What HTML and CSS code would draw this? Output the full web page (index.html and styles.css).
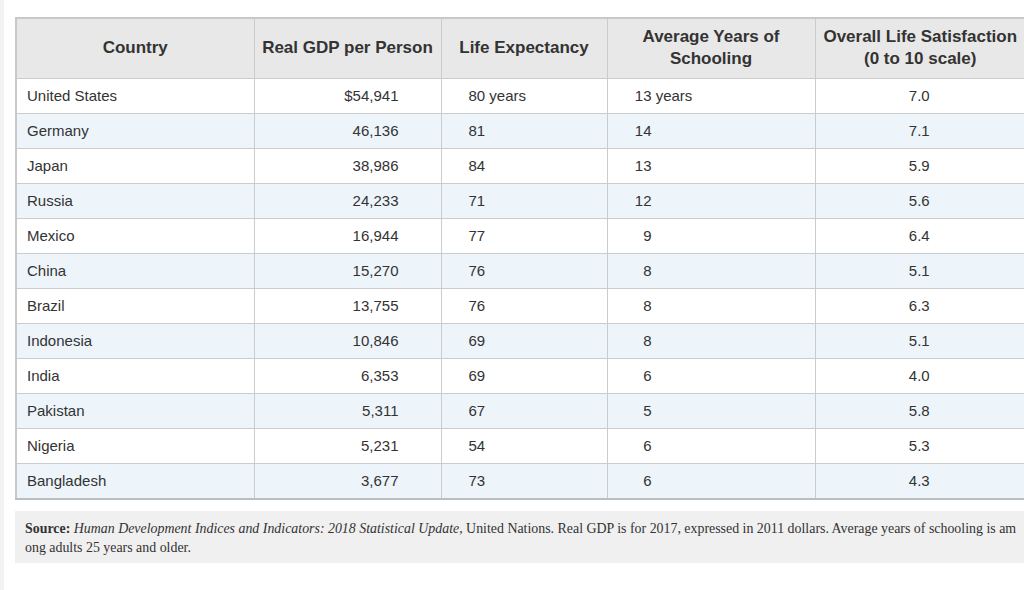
FILE: index.html
```html
<!DOCTYPE html>
<html lang="en">
<head>
<meta charset="utf-8">
<title>Country comparison</title>
<link rel="stylesheet" href="styles.css">
</head>
<body>
<div class="page">
  <table class="data">
    <colgroup>
      <col class="c-country">
      <col class="c-gdp">
      <col class="c-life">
      <col class="c-school">
      <col class="c-sat">
    </colgroup>
    <thead>
      <tr>
        <th>Country</th>
        <th>Real GDP per Person</th>
        <th>Life Expectancy</th>
        <th>Average Years of<br>Schooling</th>
        <th>Overall Life Satisfaction<br>(0 to 10 scale)</th>
      </tr>
    </thead>
    <tbody>
      <tr><td>United States</td><td class="gdp">$54,941</td><td class="life">80 years</td><td class="school"><span class="n">13</span> years</td><td class="sat">7.0</td></tr>
      <tr><td>Germany</td><td class="gdp">46,136</td><td class="life">81</td><td class="school"><span class="n">14</span></td><td class="sat">7.1</td></tr>
      <tr><td>Japan</td><td class="gdp">38,986</td><td class="life">84</td><td class="school"><span class="n">13</span></td><td class="sat">5.9</td></tr>
      <tr><td>Russia</td><td class="gdp">24,233</td><td class="life">71</td><td class="school"><span class="n">12</span></td><td class="sat">5.6</td></tr>
      <tr><td>Mexico</td><td class="gdp">16,944</td><td class="life">77</td><td class="school"><span class="n">9</span></td><td class="sat">6.4</td></tr>
      <tr><td>China</td><td class="gdp">15,270</td><td class="life">76</td><td class="school"><span class="n">8</span></td><td class="sat">5.1</td></tr>
      <tr><td>Brazil</td><td class="gdp">13,755</td><td class="life">76</td><td class="school"><span class="n">8</span></td><td class="sat">6.3</td></tr>
      <tr><td>Indonesia</td><td class="gdp">10,846</td><td class="life">69</td><td class="school"><span class="n">8</span></td><td class="sat">5.1</td></tr>
      <tr><td>India</td><td class="gdp">6,353</td><td class="life">69</td><td class="school"><span class="n">6</span></td><td class="sat">4.0</td></tr>
      <tr><td>Pakistan</td><td class="gdp">5,311</td><td class="life">67</td><td class="school"><span class="n">5</span></td><td class="sat">5.8</td></tr>
      <tr><td>Nigeria</td><td class="gdp">5,231</td><td class="life">54</td><td class="school"><span class="n">6</span></td><td class="sat">5.3</td></tr>
      <tr><td>Bangladesh</td><td class="gdp">3,677</td><td class="life">73</td><td class="school"><span class="n">6</span></td><td class="sat">4.3</td></tr>
    </tbody>
  </table>
  <p class="caption"><strong>Source:</strong> <em>Human Development Indices and Indicators: 2018 Statistical Update,</em> United Nations. Real GDP is for 2017, expressed in 2011 dollars. Average years of schooling is among adults 25 years and older.</p>
</div>
</body>
</html>
```
FILE: styles.css
```css
html, body {
  margin: 0;
  padding: 0;
  height: 100%;
}
body {
  background: #f2f2f2;
  overflow: hidden;
}
.page {
  margin-left: 4px;
  background: #ffffff;
  height: 590px;
  padding: 17px 0 0 11px;
  box-sizing: border-box;
  overflow: hidden;
}
.data {
  width: 1010px;
  table-layout: fixed;
  border-collapse: collapse;
  border: 2px solid #c8c8c8;
  font-family: "Liberation Sans", Arial, sans-serif;
  color: #333333;
}
.c-country { width: 238px; }
.c-gdp { width: 187px; }
.c-life { width: 166px; }
.c-school { width: 208px; }
.c-sat { width: 211px; }
.data th {
  background: #e8e8e8;
  font-size: 17px;
  font-weight: bold;
  line-height: 22px;
  padding: 7px 4px 8px 4px;
  height: 44px;
  text-align: center;
  border: 1px solid #cccccc;
  color: #333333;
}
.data td {
  font-size: 15px;
  line-height: 18px;
  padding: 8px 12px 8px 10px;
  border: 1px solid #cccccc;
  white-space: nowrap;
}
.data tbody tr:nth-child(even) td {
  background: #edf5fb;
}
.data tbody tr:last-child td {
  border-bottom: 2px solid #bdbdbd;
}
.data td.gdp {
  text-align: right;
  padding-right: 42px;
}
.data td.life {
  padding-left: 27px;
}
.data td.school {
  padding-left: 27px;
}
.data td.school .n {
  display: inline-block;
  min-width: 17px;
  text-align: right;
}
.data td.sat {
  text-align: center;
}
.caption {
  width: 995px;
  margin: 11px 0 0 0;
  padding: 8px 5px 6px 10px;
  background: #f0f0f0;
  font-family: "Liberation Serif", "Times New Roman", serif;
  font-size: 13.9px;
  line-height: 19px;
  color: #333333;
  word-break: break-all;
}
```
